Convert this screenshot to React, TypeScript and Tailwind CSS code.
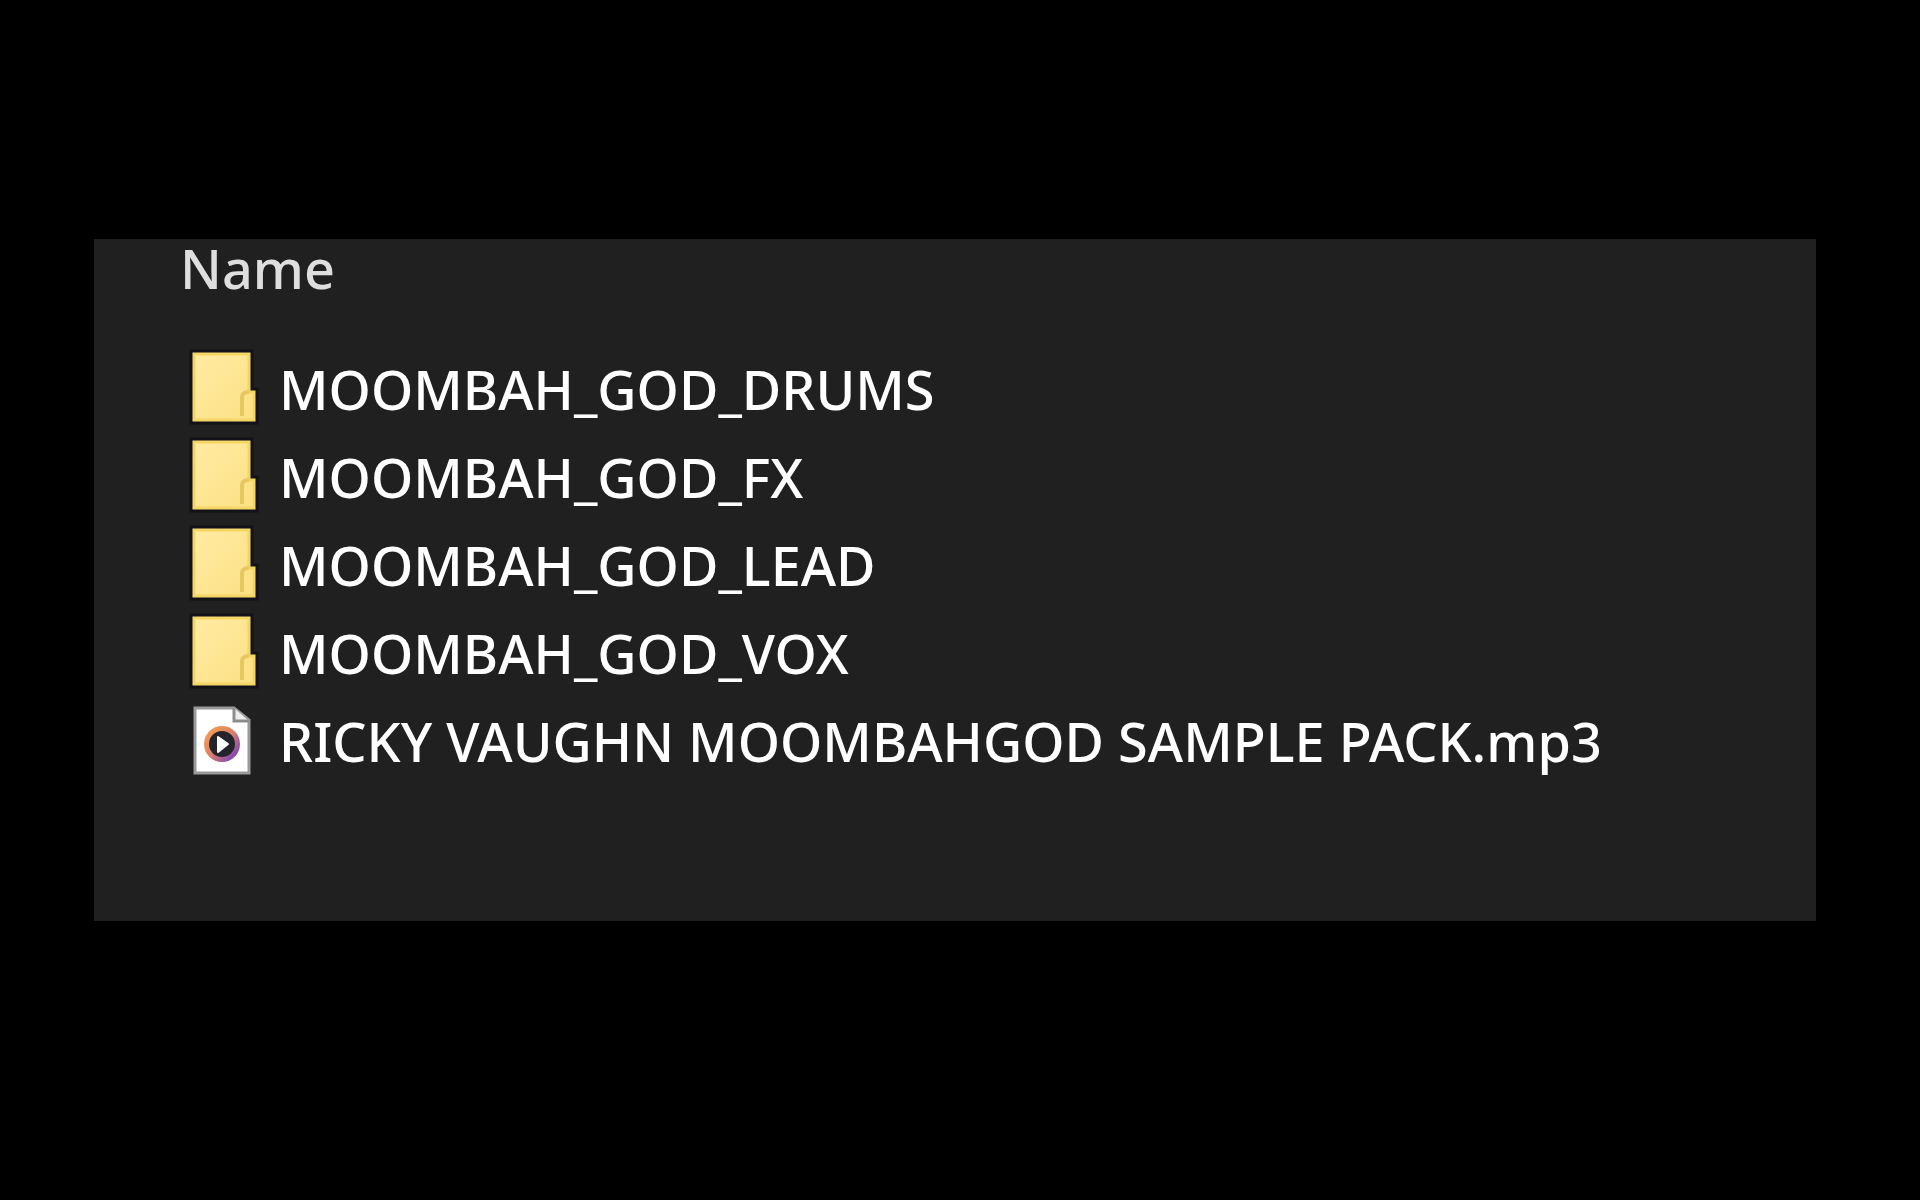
const folders = [
  "MOOMBAH_GOD_DRUMS",
  "MOOMBAH_GOD_FX",
  "MOOMBAH_GOD_LEAD",
  "MOOMBAH_GOD_VOX",
];

function FolderIcon() {
  return (
    <svg viewBox="0 0 64 70" className="h-[70px] w-16 shrink-0 overflow-visible" aria-hidden="true">
      <defs>
        <linearGradient id="folder" x1="0" y1="0" x2="1" y2="1">
          <stop offset="0" stopColor="#ffeba3" />
          <stop offset="1" stopColor="#fce083" />
        </linearGradient>
      </defs>
      <path d="M1 0H56V38H61V66H1Z" fill="none" stroke="#12121a" strokeWidth="9" />
      <path d="M1 0H56V38H61V66H1Z" fill="url(#folder)" stroke="#f5d565" strokeWidth="3" />
      <path d="M49 62V44Q49 39 54 38H56" fill="none" stroke="#e8c75e" strokeWidth="4" />
    </svg>
  );
}

function MediaIcon() {
  return (
    <svg viewBox="0 0 64 70" className="h-[70px] w-16 shrink-0" aria-hidden="true">
      <defs>
        <linearGradient id="ring" x1="0" y1="0" x2="1" y2="1">
          <stop offset="0.15" stopColor="#f39a55" />
          <stop offset="0.5" stopColor="#d8806a" />
          <stop offset="0.85" stopColor="#8446b4" />
        </linearGradient>
      </defs>
      <path d="M2 2H41L56 14V67H2Z" fill="#fff" stroke="#9a9a9a" strokeWidth="3" />
      <path d="M41 2V15H56" fill="#eee" stroke="#8d8d8d" strokeWidth="3" />
      <circle cx="29" cy="38" r="18" fill="url(#ring)" />
      <circle cx="29" cy="38" r="13" fill="#24242c" />
      <path d="M25 31L35 38L25 46Z" fill="#fff" stroke="#fff" strokeWidth="2" strokeLinejoin="round" />
    </svg>
  );
}

export default function App() {
  return (
    <main className="min-h-screen bg-black pt-[239px] pr-[104px] pl-[94px] font-['Noto_Sans','Open_Sans',sans-serif] font-medium text-white">
      <section className="bg-[#202020] pb-[136px]">
        <h1 className="pl-[86px] text-[54px] leading-[58px] text-[#dedede]">Name</h1>
        <ul className="pt-12 pl-[99px]">
          {folders.map((name) => (
            <li key={name} className="flex h-[88px] items-center gap-[22px]">
              <FolderIcon />
              <span className="text-[54px] whitespace-nowrap">{name}</span>
            </li>
          ))}
          <li className="flex h-[88px] items-center gap-[22px]">
            <MediaIcon />
            <span className="text-[54px] whitespace-nowrap">RICKY VAUGHN MOOMBAHGOD SAMPLE PACK.mp3</span>
          </li>
        </ul>
      </section>
    </main>
  );
}
